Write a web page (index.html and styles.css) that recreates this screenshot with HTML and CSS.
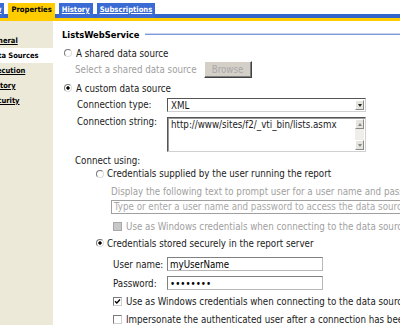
FILE: index.html
```html
<!DOCTYPE html>
<html>
<head>
    <title>ListsWebService - Properties</title>
    <link rel="stylesheet" href="styles.css">
</head>
<body>
    <div class="tabbar">
        <a class="tab">View</a>
        <a class="tab active">Properties</a>
        <a class="tab">History</a>
        <a class="tab">Subscriptions</a>
    </div>

    <div class="page">
        <div class="nav">
            <a href="#">General</a>
            <a href="#" class="current">Data Sources</a>
            <a href="#">Execution</a>
            <a href="#">History</a>
            <a href="#">Security</a>
        </div>

        <div class="main">
            <div class="title">ListsWebService</div>

            <label class="row opt shared-opt"><span class="radio"></span>A shared data source</label>
            <div class="row shared">
                <span class="muted">Select a shared data source</span>
                <button class="browse" disabled>Browse</button>
            </div>

            <label class="row opt custom-opt"><span class="radio on"></span>A custom data source</label>
            <div class="field type">
                <span class="field-label">Connection type:</span>
                <div class="select">
                    <span class="select-value">XML</span>
                    <span class="drop"><span class="tri down"></span></span>
                </div>
            </div>
            <div class="field conn">
                <span class="field-label">Connection string:</span>
                <div class="textarea">
                    <span class="ta-text">http://www/sites/f2/_vti_bin/lists.asmx</span>
                    <div class="scroll">
                        <span class="sbtn"><span class="tri up"></span></span>
                        <span class="track"></span>
                        <span class="sbtn"><span class="tri down"></span></span>
                    </div>
                </div>
            </div>

            <div class="row connect">Connect using:</div>

            <label class="row cred"><span class="radio"></span>Credentials supplied by the user running the report</label>
            <div class="row prompt-label muted">Display the following text to prompt user for a user name and password:</div>
            <div class="prompt">Type or enter a user name and password to access the data source:</div>
            <label class="row check disabled-check"><span class="box off"></span><span class="muted">Use as Windows credentials when connecting to the data source</span></label>

            <label class="row cred stored"><span class="radio on"></span>Credentials stored securely in the report server</label>
            <div class="row login user">
                <span class="login-label">User name:</span>
                <input class="text" type="text" value="myUserName">
            </div>
            <div class="row login pass">
                <span class="login-label">Password:</span>
                <input class="text" type="password" value="password">
            </div>
            <label class="row check win"><span class="box">
                <svg width="7" height="7" viewBox="0 0 7 7"><path d="M1 3.2 L2.8 5 L6 1.5" fill="none" stroke="#000" stroke-width="1.3"/></svg>
            </span>Use as Windows credentials when connecting to the data source</label>
            <label class="row check imp"><span class="box"></span>Impersonate the authenticated user after a connection has been made to the data source</label>
        </div>
    </div>
</body>
</html>
```

FILE: styles.css
```css
body {
    margin: 0;
    font-family: "DejaVu Sans", sans-serif;
    font-stretch: condensed;
    font-size: 9.7px;
    color: #1a1a1a;
    background-color: #fff;
    overflow: hidden;
}

/* tab strip */
.tabbar {
    display: flex;
    align-items: flex-end;
    height: 18px;
    margin-left: -20px;
    background: linear-gradient(#3366cc, #3366cc) left bottom / 100% 4px no-repeat;
    border-bottom: 3px solid #ffcc00;
}
.tab {
    height: 15px;
    line-height: 14px;
    padding: 0 3px;
    margin-right: 4px;
    background-color: #3a6ad4;
    color: #fff;
    font-weight: bold;
    font-size: 7.6px;
    text-decoration: underline;
}
.tab.active {
    background-color: #ffcc00;
    color: #000;
    text-decoration: none;
}

.page {
    display: flex;
    height: 304px;
}

/* left menu */
.nav {
    flex: none;
    width: 65px;
    margin-left: -12px;
    padding-top: 12px;
    background-color: #ece9d8;
}
.nav a {
    display: block;
    height: 15px;
    line-height: 15px;
    font-weight: bold;
    font-size: 7.5px;
    color: #000;
}
.nav a.current {
    background-color: #fff;
    text-decoration: none;
}

/* content */
.main {
    flex: 1;
    min-width: 0;
    padding: 6px 0 0 9px;
    white-space: nowrap;
}
.title {
    display: flex;
    align-items: center;
    gap: 5px;
    height: 14px;
    font-weight: bold;
    font-size: 9.3px;
    color: #000;
}
.title::after {
    content: "";
    flex: 1;
    height: 2px;
    background: linear-gradient(#c9d5ef 50%, #7d9bd8 50%);
}

.row {
    display: flex;
    align-items: center;
    height: 14px;
}
.muted {
    color: #a0a0a0;
}

.radio {
    flex: none;
    width: 6px;
    height: 6px;
    border: 1px solid;
    border-color: #7a7a7a #dcdcdc #dcdcdc #7a7a7a;
    border-radius: 50%;
    background-color: #fff;
}
.radio.on {
    background: radial-gradient(circle, #000 1.4px, #fff 1.9px);
}
.opt {
    margin: 5px 0 0 2px;
    gap: 4px;
}
.custom-opt {
    margin-top: 3px;
}

.shared {
    height: 17px;
    margin: 1px 0 0 13px;
}
.browse {
    height: 17px;
    width: 48px;
    margin-left: 7px;
    padding: 0;
    font: inherit;
    color: #a8a8a8;
    background-color: #d4d0c8;
    border: 1px solid;
    border-color: #fff #404040 #404040 #fff;
    box-shadow: inset -1px -1px #808080;
}

.field {
    display: flex;
    margin: 3px 0 0 15px;
}
.conn {
    margin-top: 5px;
}
.field-label {
    width: 90px;
    line-height: 14px;
}
.conn .field-label {
    line-height: 10px;
}
.select {
    display: flex;
    align-items: center;
    box-sizing: border-box;
    width: 199px;
    height: 14px;
    padding: 0 1px 0 3px;
    border: 1px solid;
    border-color: #555 #d0d0d0 #d0d0d0 #555;
    background-color: #fff;
}
.select-value {
    flex: 1;
}
.drop, .sbtn {
    display: flex;
    align-items: center;
    justify-content: center;
    box-sizing: border-box;
    width: 9px;
    height: 10px;
    background-color: #e6e4de;
    border: 1px solid;
    border-color: #fff #8a8a8a #8a8a8a #fff;
}
.tri {
    width: 0;
    height: 0;
    border-left: 2.5px solid transparent;
    border-right: 2.5px solid transparent;
}
.tri.down {
    border-top: 3px solid #222;
}
.tri.up {
    border-bottom: 3px solid #888;
}
.sbtn .tri.down {
    border-top-color: #888;
}

.textarea {
    display: flex;
    box-sizing: border-box;
    width: 199px;
    height: 35px;
    padding: 1px 1px 1px 3px;
    border: 1px solid;
    border-color: #555 #d0d0d0 #d0d0d0 #555;
    box-shadow: inset 1px 1px #9a9a9a;
    background-color: #fff;
}
.ta-text {
    flex: 1;
    line-height: 11px;
}
.scroll {
    display: flex;
    flex-direction: column;
    width: 9px;
}
.track {
    flex: 1;
    background-color: #efeee9;
}

.connect {
    height: 13px;
    margin: 2px 0 0 13px;
}
.cred {
    height: 13px;
    margin-left: 34px;
    gap: 3px;
}
.prompt-label {
    margin: 4px 0 0 49px;
}
.prompt {
    box-sizing: border-box;
    height: 14px;
    margin: 2px -20px 0 49px;
    padding-left: 2px;
    line-height: 12px;
    border: 1px solid #a0a0a0;
    color: #a8a8a8;
    overflow: hidden;
}

.box {
    flex: none;
    display: flex;
    width: 7px;
    height: 7px;
    border: 1px solid;
    border-color: #7a7a7a #cfcfcf #cfcfcf #7a7a7a;
    background-color: #fff;
}
.box.off {
    background-color: #c8c8c8;
    border-color: #a8a8a8;
}
.check {
    gap: 4px;
    margin: 5px 0 0 51px;
}
.stored {
    height: 14px;
    margin-top: 3px;
}

.login {
    margin: 7px 0 0 51px;
}
.login.pass {
    margin-top: 5px;
}
.login-label {
    width: 54px;
}
.text {
    box-sizing: border-box;
    width: 156px;
    height: 14px;
    margin: 0;
    padding: 0 2px;
    font: inherit;
    color: #000;
    border: 1px solid;
    border-color: #808080 #b8b8b8 #b8b8b8 #808080;
    outline: none;
}
.win {
    margin-top: 4px;
}
.imp {
    margin-top: 4px;
}
```
